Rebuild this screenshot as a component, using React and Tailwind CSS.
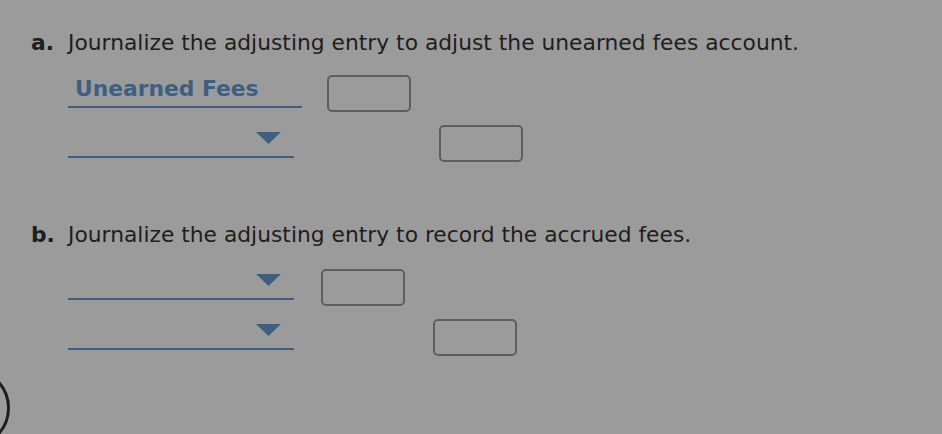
import React from "react";

const BLUE = "#3d5f82";

function Arrow() {
  return (
    <svg width="25" height="12" viewBox="0 0 25 12">
      <polygon points="0,0 25,0 12.5,12" fill={BLUE} />
    </svg>
  );
}

function Select({ label, width = "w-[226px]" }) {
  return (
    <div
      className={`
        ${width} h-[34px]
        border-b-2 border-[#3d5f82]
        flex items-start justify-between
        shrink-0
      `}
    >
      {label ? (
        <span className="pl-[7px] pt-[1px] font-bold text-[#3d5f82] leading-[28px]">
          {label}
        </span>
      ) : (
        <span />
      )}
      {!label && (
        <span className="pt-[8px] pr-[13px]">
          <Arrow />
        </span>
      )}
    </div>
  );
}

function Box() {
  return (
    <div className="w-[84px] h-[37px] shrink-0 rounded-[5px] border-2 border-[#5e5e5e]" />
  );
}

function Row({ label, width, gap, mt = "mt-[1px]" }) {
  return (
    <div className="flex items-start h-[50px]">
      <Select label={label} width={width} />
      <div className={`${gap} ${mt}`}>
        <Box />
      </div>
    </div>
  );
}

function Heading({ letter, children }) {
  return (
    <div className="flex leading-[24px]">
      <span className="w-[37px] font-bold shrink-0">{letter}</span>
      <span>{children}</span>
    </div>
  );
}

export default function App() {
  return (
    <div
      className="relative w-[942px] h-[434px] overflow-hidden bg-[#9b9b9b] text-[#1e1e1e] text-[21.8px]"
      style={{ fontFamily: '"DejaVu Sans", Verdana, sans-serif' }}
    >
      <div className="pl-[31px] pt-[31px]">
        <Heading letter="a.">
          Journalize the adjusting entry to adjust the unearned fees account.
        </Heading>

        <div className="pl-[37px] mt-[19px]">
          <Row label="Unearned Fees" width="w-[234px]" gap="ml-[25px]" />
          <Row width="w-[226px]" gap="ml-[145px]" />
        </div>

        <div className="mt-[49px]">
          <Heading letter="b.">
            Journalize the adjusting entry to record the accrued fees.
          </Heading>
        </div>

        <div className="pl-[37px] mt-[19px]">
          <Row width="w-[226px]" gap="ml-[27px]" mt="mt-[3px]" />
          <Row width="w-[226px]" gap="ml-[139px]" mt="mt-[3px]" />
        </div>
      </div>

      <div className="absolute left-[-70px] top-[368px] w-[80px] h-[80px] rounded-full border-[3px] border-[#1e1e1e]" />
    </div>
  );
}
